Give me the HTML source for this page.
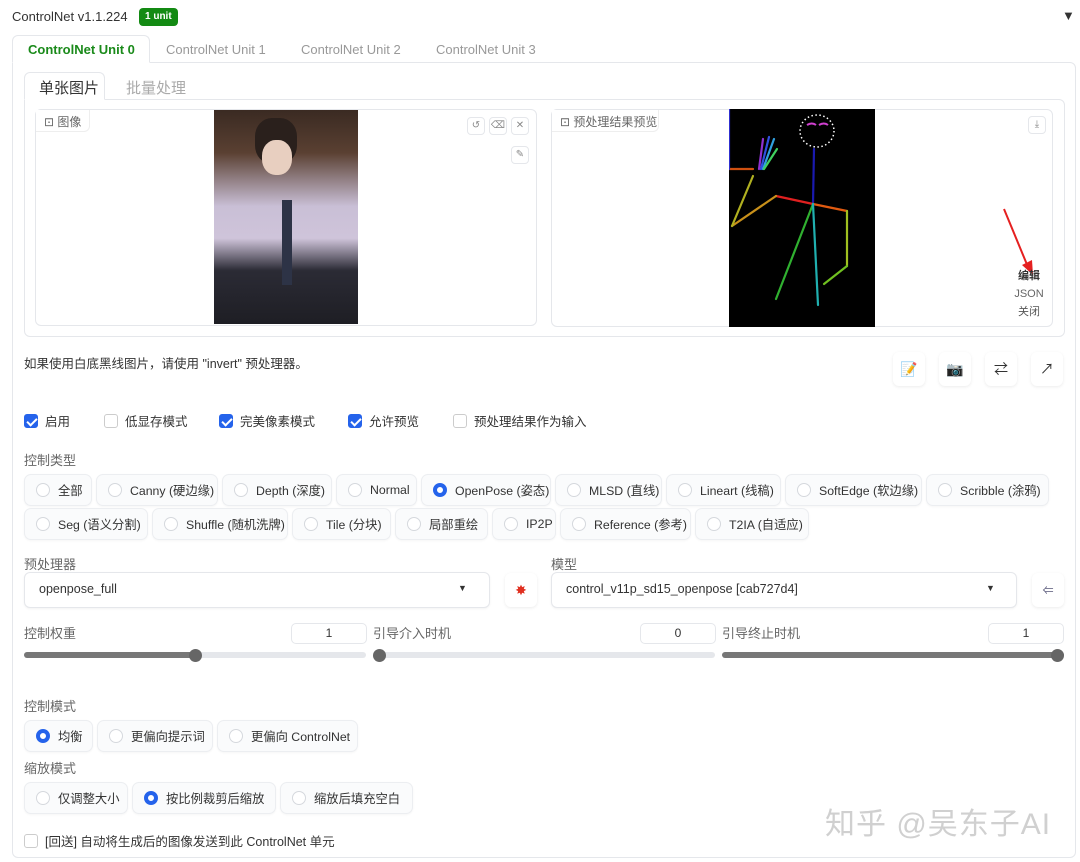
<!DOCTYPE html>
<html><head><meta charset="utf-8"><style>
*{box-sizing:border-box;margin:0;padding:0}
body{width:1080px;height:862px;background:#fff;font-family:"Liberation Sans","Noto Sans CJK SC",sans-serif;font-size:13px;color:#333;position:relative;overflow:hidden}
.a{position:absolute}
.lbl{color:#666;font-size:13px}
.rb{position:absolute;height:32px;border:1px solid #eceef1;border-radius:7px;background:#fafbfc;box-shadow:0 1px 2px rgba(0,0,0,.04);display:flex;align-items:center;padding-left:11px;font-size:12.3px;color:#333;white-space:nowrap;overflow:hidden}
.rb i{width:14px;height:14px;border-radius:50%;border:1px solid #d5d8dd;background:#fff;margin-right:8px;flex:none}
.rb i.on{border:4px solid #2563eb;background:#fff}
.cb{position:absolute;display:flex;align-items:center;font-size:12.5px;color:#333}
.cb i{width:14px;height:14px;border-radius:3px;border:1px solid #ccc;margin-right:7px;background:#fff;position:relative}
.cb i.on{background:#2563eb;border-color:#2563eb}
.cb i.on:after{content:"";position:absolute;left:4px;top:1px;width:4px;height:8px;border:solid #fff;border-width:0 2px 2px 0;transform:rotate(45deg)}
.box{position:absolute;border:1px solid #e5e7eb;border-radius:6px;background:#fff}
.num{position:absolute;width:76px;height:21px;border:1px solid #e5e7eb;border-radius:5px;text-align:center;font-size:12px;line-height:19px}
.track{position:absolute;height:6px;border-radius:3px;background:#e5e7eb}
.fill{position:absolute;height:6px;border-radius:3px;background:#777}
.thumb{position:absolute;width:13px;height:13px;border-radius:50%;background:#666}
.btn{position:absolute;width:32px;height:34px;border-radius:6px;background:#fff;box-shadow:0 1px 3px rgba(0,0,0,.08);display:flex;align-items:center;justify-content:center;font-size:14px}
.ib{position:absolute;width:18px;height:18px;border:1px solid #e5e7eb;border-radius:4px;font-size:10px;color:#888;text-align:center;line-height:16px;background:#fff}
</style></head><body>
<div class="a" style="left:12px;top:9px;font-size:13px;color:#333">ControlNet v1.1.224</div>
<div class="a" style="left:139px;top:8px;background:#138a13;color:#fff;font-size:10px;font-weight:bold;border-radius:4px;padding:3px 6px;line-height:12px">1 unit</div>
<div class="a" style="left:1062px;top:8px;font-size:13px;color:#333">▼</div>

<div class="box" style="left:12px;top:62px;width:1064px;height:796px;border-radius:0 6px 6px 6px"></div>
<div class="a" style="left:12px;top:35px;width:138px;height:28px;border:1px solid #e5e7eb;border-bottom:1px solid #fff;border-radius:6px 6px 0 0;background:#fff"></div>
<div class="a" style="left:28px;top:42px;color:#1a8a1a;font-size:13px;font-weight:bold">ControlNet Unit 0</div>
<div class="a" style="left:166px;top:42px;color:#999;font-size:13px">ControlNet Unit 1</div>
<div class="a" style="left:301px;top:42px;color:#999;font-size:13px">ControlNet Unit 2</div>
<div class="a" style="left:436px;top:42px;color:#999;font-size:13px">ControlNet Unit 3</div>

<div class="box" style="left:24px;top:99px;width:1041px;height:238px;border-radius:0 6px 6px 6px"></div>
<div class="a" style="left:24px;top:72px;width:81px;height:28px;border:1px solid #e5e7eb;border-bottom:1px solid #fff;border-radius:6px 6px 0 0;background:#fff"></div>
<div class="a" style="left:39px;top:77px;font-size:15px;color:#333">单张图片</div>
<div class="a" style="left:126px;top:77px;font-size:15px;color:#aaa">批量处理</div>

<div class="box" style="left:35px;top:109px;width:502px;height:217px"></div>
<div class="a" style="left:214px;top:110px;width:144px;height:214px;background:linear-gradient(180deg,#3a2a22 0%,#5a4032 20%,#c9bfd6 45%,#cfc4da 60%,#2b2b35 75%,#1e1e24 100%)"></div>
<div class="a" style="left:255px;top:118px;width:42px;height:46px;border-radius:40%;background:#2a201c"></div>
<div class="a" style="left:262px;top:140px;width:30px;height:35px;border-radius:45%;background:#e8cfc0"></div>
<div class="a" style="left:282px;top:200px;width:10px;height:85px;background:#2d3346"></div>
<div class="a" style="left:36px;top:110px;width:54px;height:22px;border-right:1px solid #eee;border-bottom:1px solid #eee;border-radius:0 0 6px 0;background:#fff;font-size:12px;color:#666;padding:3px 0 0 8px">⊡ 图像</div>
<div class="ib" style="left:467px;top:117px">↺</div>
<div class="ib" style="left:489px;top:117px">⌫</div>
<div class="ib" style="left:511px;top:117px">✕</div>
<div class="ib" style="left:511px;top:146px">✎</div>

<div class="box" style="left:551px;top:109px;width:502px;height:218px"></div>
<div class="a" style="left:729px;top:109px;width:146px;height:218px;background:#000"></div>
<svg class="a" style="left:729px;top:109px" width="146" height="218">
<g stroke-width="2.2" fill="none" stroke-linecap="round">
<line x1="85" y1="40" x2="84" y2="95" stroke="#1a1ab0"/>
<line x1="84" y1="95" x2="47" y2="87" stroke="#e02020"/>
<line x1="84" y1="95" x2="118" y2="102" stroke="#e05a10"/>
<line x1="47" y1="87" x2="3" y2="117" stroke="#c8901a"/>
<line x1="3" y1="117" x2="24" y2="67" stroke="#b0b020"/>
<line x1="118" y1="102" x2="118" y2="157" stroke="#a0c020"/>
<line x1="118" y1="157" x2="95" y2="175" stroke="#70c020"/>
<line x1="84" y1="95" x2="47" y2="190" stroke="#30b030"/>
<line x1="84" y1="95" x2="89" y2="196" stroke="#20b0b0"/>
<line x1="0" y1="60" x2="24" y2="60" stroke="#d05010"/>
<line x1="30" y1="60" x2="34" y2="30" stroke="#9030d0"/>
<line x1="32" y1="60" x2="40" y2="28" stroke="#3050e0"/>
<line x1="34" y1="60" x2="45" y2="30" stroke="#30a0e0"/>
<line x1="35" y1="60" x2="48" y2="40" stroke="#40d060"/>
<line x1="0" y1="0" x2="0" y2="60" stroke="#3030d0"/>
</g>
<ellipse cx="88" cy="22" rx="17" ry="16" stroke="#fff" stroke-dasharray="1.5 2.5" fill="none" stroke-width="1.5"/>
<path d="M78 16 q5 -3 9 0 M90 16 q5 -3 9 0" stroke="#d040d0" stroke-width="2" fill="none"/>
</svg>
<div class="a" style="left:552px;top:110px;width:107px;height:22px;border-right:1px solid #eee;border-bottom:1px solid #eee;border-radius:0 0 6px 0;background:#fff;font-size:12px;color:#666;padding:3px 0 0 8px">⊡ 预处理结果预览</div>
<div class="ib" style="left:1028px;top:116px">⤓</div>
<svg class="a" style="left:1000px;top:205px" width="40" height="80"><line x1="4" y1="4" x2="28" y2="62" stroke="#e52020" stroke-width="2"/><polygon points="22,60 33,70 32,55" fill="#e52020"/></svg>
<div class="a" style="left:1014px;top:267px;width:30px;font-size:11px;line-height:18px;color:#333;text-align:center"><b>编辑</b><br><span style="color:#666">JSON</span><br><span style="color:#555">关闭</span></div>

<div class="a" style="left:24px;top:353px;font-size:12.5px">如果使用白底黑线图片，请使用 "invert" 预处理器。</div>
<div class="btn" style="left:893px;top:352px;color:#e07030">📝</div>
<div class="btn" style="left:939px;top:352px;color:#446">📷</div>
<div class="btn" style="left:985px;top:352px">⇄</div>
<div class="btn" style="left:1031px;top:352px">↗</div>

<div class="cb" style="left:24px;top:411px"><i class="on"></i>启用</div>
<div class="cb" style="left:104px;top:411px"><i></i>低显存模式</div>
<div class="cb" style="left:219px;top:411px"><i class="on"></i>完美像素模式</div>
<div class="cb" style="left:348px;top:411px"><i class="on"></i>允许预览</div>
<div class="cb" style="left:453px;top:411px"><i></i>预处理结果作为输入</div>

<div class="a lbl" style="left:24px;top:450px">控制类型</div>
<div class="rb" style="left:24px;top:474px;width:68px"><i></i>全部</div>
<div class="rb" style="left:96px;top:474px;width:122px"><i></i>Canny (硬边缘)</div>
<div class="rb" style="left:222px;top:474px;width:110px"><i></i>Depth (深度)</div>
<div class="rb" style="left:336px;top:474px;width:81px"><i></i>Normal</div>
<div class="rb" style="left:421px;top:474px;width:130px"><i class="on"></i>OpenPose (姿态)</div>
<div class="rb" style="left:555px;top:474px;width:107px"><i></i>MLSD (直线)</div>
<div class="rb" style="left:666px;top:474px;width:115px"><i></i>Lineart (线稿)</div>
<div class="rb" style="left:785px;top:474px;width:137px"><i></i>SoftEdge (软边缘)</div>
<div class="rb" style="left:926px;top:474px;width:123px"><i></i>Scribble (涂鸦)</div>
<div class="rb" style="left:24px;top:508px;width:124px"><i></i>Seg (语义分割)</div>
<div class="rb" style="left:152px;top:508px;width:136px"><i></i>Shuffle (随机洗牌)</div>
<div class="rb" style="left:292px;top:508px;width:99px"><i></i>Tile (分块)</div>
<div class="rb" style="left:395px;top:508px;width:93px"><i></i>局部重绘</div>
<div class="rb" style="left:492px;top:508px;width:64px"><i></i>IP2P</div>
<div class="rb" style="left:560px;top:508px;width:131px"><i></i>Reference (参考)</div>
<div class="rb" style="left:695px;top:508px;width:114px"><i></i>T2IA (自适应)</div>

<div class="a lbl" style="left:24px;top:554px">预处理器</div>
<div class="box" style="left:24px;top:572px;width:466px;height:36px;box-shadow:0 1px 2px rgba(0,0,0,.05)"></div>
<div class="a" style="left:39px;top:582px;font-size:12.5px">openpose_full</div>
<div class="a" style="left:458px;top:583px;font-size:9px">▼</div>
<div class="btn" style="left:505px;top:573px;color:#e03020">✸</div>
<div class="a lbl" style="left:551px;top:554px">模型</div>
<div class="box" style="left:551px;top:572px;width:466px;height:36px;box-shadow:0 1px 2px rgba(0,0,0,.05)"></div>
<div class="a" style="left:566px;top:582px;font-size:12.5px">control_v11p_sd15_openpose [cab727d4]</div>
<div class="a" style="left:986px;top:583px;font-size:9px">▼</div>
<div class="btn" style="left:1032px;top:573px;color:#557;font-size:11px">⇐</div>

<div class="a lbl" style="left:24px;top:623px">控制权重</div>
<div class="num" style="left:291px;top:623px">1</div>
<div class="a lbl" style="left:373px;top:623px">引导介入时机</div>
<div class="num" style="left:640px;top:623px">0</div>
<div class="a lbl" style="left:722px;top:623px">引导终止时机</div>
<div class="num" style="left:988px;top:623px">1</div>
<div class="track" style="left:24px;top:652px;width:342px"></div>
<div class="fill" style="left:24px;top:652px;width:172px"></div>
<div class="thumb" style="left:189px;top:649px"></div>
<div class="track" style="left:373px;top:652px;width:342px"></div>
<div class="thumb" style="left:373px;top:649px"></div>
<div class="fill" style="left:722px;top:652px;width:342px"></div>
<div class="thumb" style="left:1051px;top:649px"></div>

<div class="a lbl" style="left:24px;top:696px">控制模式</div>
<div class="rb" style="left:24px;top:720px;width:69px"><i class="on"></i>均衡</div>
<div class="rb" style="left:97px;top:720px;width:116px"><i></i>更偏向提示词</div>
<div class="rb" style="left:217px;top:720px;width:141px"><i></i>更偏向 ControlNet</div>
<div class="a lbl" style="left:24px;top:758px">缩放模式</div>
<div class="rb" style="left:24px;top:782px;width:104px"><i></i>仅调整大小</div>
<div class="rb" style="left:132px;top:782px;width:144px"><i class="on"></i>按比例裁剪后缩放</div>
<div class="rb" style="left:280px;top:782px;width:133px"><i></i>缩放后填充空白</div>
<div class="cb" style="left:24px;top:831px"><i></i>[回送] 自动将生成后的图像发送到此 ControlNet 单元</div>
<div class="a" style="left:825px;top:799px;font-size:30px;color:rgba(200,200,200,.85);letter-spacing:1px">知乎 @吴东子AI</div>
</body></html>
